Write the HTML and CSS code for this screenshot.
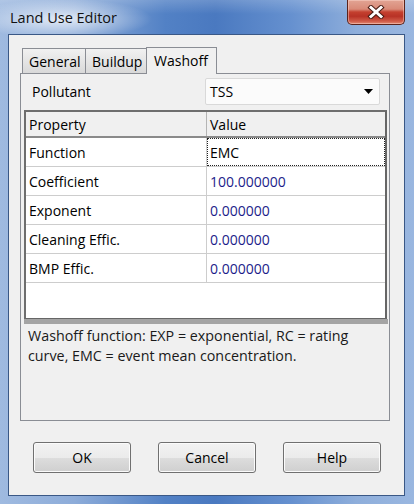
FILE: index.html
```html
<!DOCTYPE html>
<html>
<head>
<meta charset="utf-8">
<link rel="stylesheet" href="styles.css">
</head>
<body>
<div class="window">
  <div class="titlebar">
    <span class="title">Land Use Editor</span>
    <div class="close">
      <svg width="18" height="14" viewBox="0 0 18 14">
        <path d="M4 2.5 L14 11.5 M14 2.5 L4 11.5" stroke="#4a1c14" stroke-width="5" stroke-linecap="square" fill="none"/>
        <path d="M4 2.5 L14 11.5 M14 2.5 L4 11.5" stroke="#ffffff" stroke-width="3" stroke-linecap="square" fill="none"/>
      </svg>
    </div>
  </div>
  <div class="client">
    <div class="tabs">
      <div class="tab tab-general">General</div>
      <div class="tab tab-buildup">Buildup</div>
      <div class="tab tab-washoff active">Washoff</div>
    </div>
    <div class="panel">
      <div class="pollutant-row">
        <span class="label">Pollutant</span>
        <div class="combo">
          <span>TSS</span>
          <svg class="arrow" width="9" height="5" viewBox="0 0 9 5"><path d="M0 0 H9 L4.5 5 Z" fill="#000"/></svg>
        </div>
      </div>
      <div class="grid">
        <div class="row header"><div class="cell name">Property</div><div class="cell">Value</div></div>
        <div class="row"><div class="cell name">Function</div><div class="cell value-text focus">EMC</div></div>
        <div class="row"><div class="cell name">Coefficient</div><div class="cell value">100.000000</div></div>
        <div class="row"><div class="cell name">Exponent</div><div class="cell value">0.000000</div></div>
        <div class="row"><div class="cell name">Cleaning Effic.</div><div class="cell value">0.000000</div></div>
        <div class="row"><div class="cell name">BMP Effic.</div><div class="cell value">0.000000</div></div>
        <div class="filler"></div>
      </div>
      <div class="splitter"></div>
      <div class="desc">Washoff function: EXP = exponential, RC = rating<br>curve, EMC = event mean concentration.</div>
    </div>
    <div class="buttons">
      <div class="btn">OK</div>
      <div class="btn">Cancel</div>
      <div class="btn">Help</div>
    </div>
  </div>
</div>
</body>
</html>
```
FILE: styles.css
```css
* { box-sizing: border-box; }
html, body { margin: 0; padding: 0; }
body {
  width: 414px;
  height: 504px;
  overflow: hidden;
  font-family: "Open Sans", "Noto Sans", sans-serif;
  font-size: 14px;
  color: #000;
}
.window {
  width: 414px;
  height: 504px;
  display: flex;
  flex-direction: column;
  padding: 0 9px 8px 8px;
  background:
    radial-gradient(ellipse 90px 20px at 62px 19px, rgba(255,255,255,0.75), rgba(255,255,255,0) 100%),
    linear-gradient(180deg, rgba(255,255,255,0.18) 0px, rgba(255,255,255,0) 14px),
    linear-gradient(90deg, #9fbae0 0%, #8dacd9 18%, #5281c5 40%, #4a79c0 52%, #6590cf 70%, #8eaedb 86%, #9ab7e0 100%);
}
.titlebar {
  height: 34px;
  flex: none;
  display: flex;
  justify-content: space-between;
  align-items: flex-start;
}
.title {
  margin-top: 8px;
  padding-left: 2px;
  line-height: 20px;
  font-size: 14.5px;
  color: #111;
}
.close {
  width: 58px;
  height: 25px;
  border: 1px solid #5b231b;
  border-top: none;
  border-radius: 0 0 5px 5px;
  background: linear-gradient(180deg, #e2a494 0%, #d98a78 38%, #c4402f 50%, #b83226 68%, #cf5a47 88%, #e28a74 100%);
  box-shadow: inset 0 0 0 1px rgba(255,220,210,0.45);
  display: flex;
  align-items: center;
  justify-content: center;
}
.client {
  flex: 1;
  background: #f0f0f0;
  border: 1px solid #3a5886;
  padding: 12px 15px 0 11px;
}
.tabs {
  display: flex;
  align-items: flex-end;
  height: 26px;
  margin-left: 2px;
}
.tab {
  height: 25px;
  border: 1px solid #8a8d94;
  border-bottom: none;
  background: linear-gradient(180deg, #f1f1f1 0%, #e5e5e5 50%, #d9d9d9 100%);
  padding: 2px 0 0 6px;
  line-height: 22px;
  white-space: nowrap;
}
.tab-general { width: 64px; }
.tab-buildup { width: 62px; margin-left: -1px; }
.tab-washoff { width: 71px; margin-left: -1px; }
.tab.active {
  height: 27px;
  margin-bottom: -1px;
  background: #f0f0f0;
  position: relative;
  z-index: 1;
  padding: 1px 0 0 7px;
  line-height: 24px;
}
.panel {
  width: 370px;
  height: 348px;
  border: 1px solid #8a8d94;
  background: #f0f0f0;
  padding: 4px 1px 0 3px;
}
.pollutant-row {
  display: flex;
  align-items: center;
  height: 27px;
}
.label {
  width: 181px;
  padding-left: 8px;
  flex: none;
}
.combo {
  width: 175px;
  height: 27px;
  border: 1px solid #d9d9d9;
  border-radius: 2px;
  background: #fbfbfb;
  display: flex;
  align-items: center;
  justify-content: space-between;
  padding: 0 6px 0 4px;
}
.grid {
  margin-top: 5px;
  width: 363px;
  height: 209px;
  border-top: 2px solid #6e6e6e;
  border-left: 2px solid #6e6e6e;
  border-right: 2px solid #666;
  border-bottom: 1px solid #666;
  background: #fff;
  display: flex;
  flex-direction: column;
}
.row {
  height: 29px;
  flex: none;
  display: flex;
  border-bottom: 1px solid #cdcdcd;
}
.row.header {
  height: 26px;
  background: #f0f0f0;
  border-bottom: 2px solid #8a8a8a;
}
.cell {
  display: flex;
  align-items: center;
  padding-left: 3px;
  white-space: nowrap;
  flex: 1;
}
.cell.name {
  flex: none;
  width: 181px;
  border-right: 1px solid #cdcdcd;
}
.row.header .cell.name { border-right-color: #b4b4b4; }
.value { color: #1c1c8a; }
.focus {
  outline: 1px dotted #222;
  outline-offset: -1px;
}
.filler { flex: 1; }
.splitter {
  width: 364px;
  height: 5px;
  background: #a4a4a4;
}
.desc {
  margin-top: 2px;
  padding-left: 4px;
  line-height: 20px;
  font-size: 14.3px;
  color: #1a1a1a;
}
.buttons {
  display: flex;
  gap: 27px;
  margin: 21px 0 0 13px;
}
.btn {
  width: 98px;
  height: 31px;
  border: 1px solid #707070;
  border-radius: 3px;
  background: linear-gradient(180deg, #f2f2f2 0%, #ebebeb 50%, #dddddd 51%, #cfcfcf 100%);
  box-shadow: inset 0 0 0 1px #fbfbfb;
  display: flex;
  align-items: center;
  justify-content: center;
}
```
